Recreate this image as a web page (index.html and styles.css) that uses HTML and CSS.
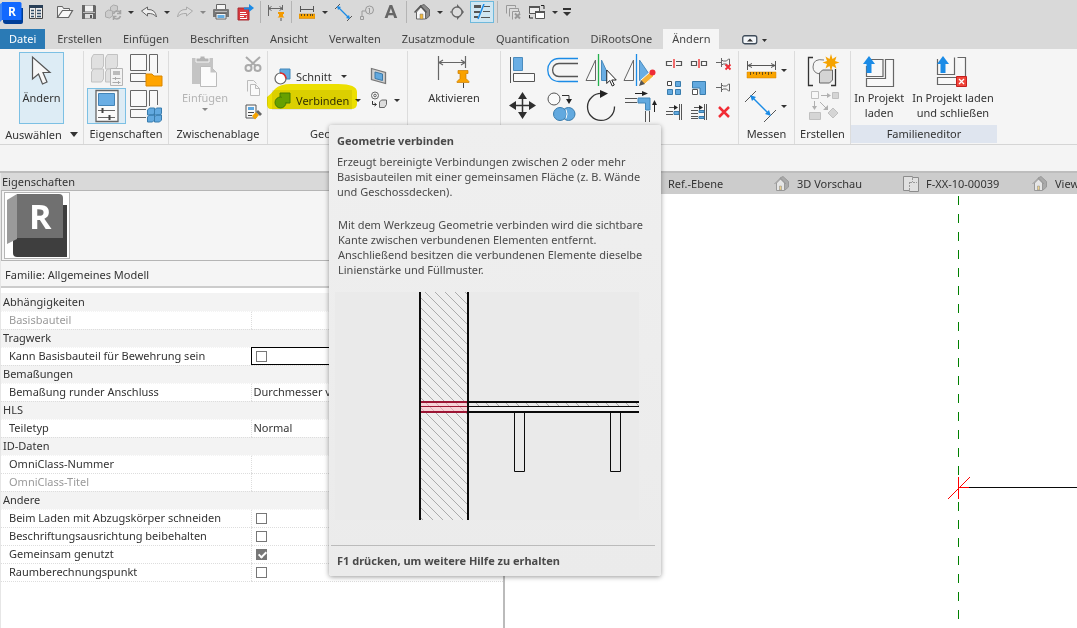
FILE: index.html
```html
<!DOCTYPE html>
<html lang="de">
<head>
<meta charset="utf-8">
<meta name="viewport" content="width=device-width, initial-scale=1">
<title>Revit – Familieneditor</title>
<link rel="stylesheet" href="styles.css">
</head>
<body>
<header class="top">
  <div class="qat">
    <button class="logo" aria-label="Revit"><svg width="24" height="24" viewBox="0 0 24 24"><path d="M3 8h20v14q0 2-2 2H6q-3 0-3-3z" fill="#003e97"/><path d="M0 4l3-2v17l-3 3z" fill="#3f86f4"/><path d="M2 2h18q1.500 0 1.500 1.500V20H2z" fill="#1269ff"/><text x="8" y="16" class="logo-r">R</text></svg></button>
    <button class="q" aria-label="Startseite"><svg width="16" height="16" viewBox="0 0 16 16"><path d="M1.500 1.500h13v13h-13z" fill="#eee" stroke="#444"/><path d="M1 1h14v3H1z" fill="#2a4058"/><path d="M3 6.500h3M3 9.500h3M3 12.500h3M9 6.500h4M9 9.500h4M9 12.500h4" stroke="#334e68" stroke-width="1.300"/><path d="M7.500 4v11" stroke="#777"/></svg></button>
    <span class="spacer"></span>
    <button class="q" aria-label="Öffnen"><svg width="18" height="16" viewBox="0 0 18 16"><path d="M1.500 13.500v-11h5l1 2h6v3" fill="#f3f3f3" stroke="#666"/><path d="M1.500 13.500l5-7h10l-4 7z" fill="#f8f8f8" stroke="#666" stroke-width="1.200"/></svg></button>
    <button class="q" aria-label="Speichern"><svg width="16" height="16" viewBox="0 0 16 16"><path d="M1 1h13l1 1v13H1z" fill="#666"/><path d="M4 1.500h8v6H4z" fill="#f0f0f0"/><path d="M4 10h8v4.500H4z" fill="#ddd"/><path d="M9 11h2v3H9z" fill="#555"/><path d="M2 8.500h12" stroke="#bbb"/></svg></button>
    <button class="q" aria-label="Synchronisieren"><svg width="18" height="17" viewBox="0 0 18 17"><g fill="#ccc" stroke="#aaa"><path d="M6.500 3l3-2 4 1v4l-3 2-4-1z"/><path d="M1.500 8l3-2 4 1v5l-3 2-4-1z"/></g><path d="M9.500 10q1-3 4-3 2 0 3 2M16.500 6v3.500H13M16.500 12q-1 3-4 3-2 0-3-2M9.500 16v-3.500h3" fill="none" stroke="#a4a4a4" stroke-width="1.500"/></svg></button>
    <button class="dd" aria-label="Synchronisieren Optionen"></button>
    <button class="q" aria-label="Rückgängig"><svg width="18" height="14" viewBox="0 0 18 14"><path d="M1.500 6l6-4v2.500q8-.500 9 7.500-3-4-9-3.500V11z" fill="#eee" stroke="#666"/></svg></button>
    <button class="dd" aria-label="Rückgängig Liste"></button>
    <button class="q" aria-label="Wiederholen"><svg width="18" height="14" viewBox="0 0 18 14"><path d="M16.500 6l-6-4v2.500q-8-.500-9 7.500 3-4 9-3.500V11z" fill="#ddd" stroke="#aaa"/></svg></button>
    <button class="dd pale" aria-label="Wiederholen Liste"></button>
    <button class="q" aria-label="Drucken"><svg width="18" height="16" viewBox="0 0 18 16"><path d="M4.500.500h9v5h-9z" fill="#f5f5f5" stroke="#666"/><path d="M2 5h14q1 0 1 1v7H1V6q0-1 1-1z" fill="#777"/><path d="M3 7.500h12" stroke="#bbb"/><path d="M4 9.500h10v5.500H4z" fill="#f4f4f4" stroke="#666"/><path d="M5.500 11h7v3h-7z" fill="#65ade2"/></svg></button>
    <button class="q" aria-label="PDF exportieren"><svg width="17" height="17" viewBox="0 0 17 17"><path d="M1 4h11v12H1z" fill="#d9393e" stroke="#a92f35"/><path d="M3 8.500h6M3 10.500h7M3 12.500h4M9 13h1M3 14.500h7" stroke="#fff"/><path d="M7 3.500h5V0l5 4-5 4V5.500H7z" fill="#1b8be6"/></svg></button>
    <span class="sep"></span>
    <button class="q" aria-label="Bemaßung aktivieren"><svg width="18" height="17" viewBox="0 0 18 17"><path d="M1.500 1v11M15.500 1v5M2 4.500h13M4.500 2.500l-3 2 3 2M12.500 2.500l3 2-3 2" fill="none" stroke="#666"/><path d="M11 8h6v2h-1v2l1.500 1.500h-7L12 12v-2h-1z" fill="#f39a00"/><path d="M14 14v3" stroke="#555"/></svg></button>
    <span class="sep"></span>
    <button class="q" aria-label="Messen"><svg width="16" height="14" viewBox="0 0 16 14"><path d="M1.500 1v6M14.500 1v6M2 4.500h12" stroke="#555"/><path d="M0 9h16v4.500H0z" fill="#f9a400" stroke="#cc7d00" stroke-width=".500"/><path d="M2.500 9v2M5.500 9v2M8.500 9v2M11.500 9v2M13.500 9v2" stroke="#5c4a20"/></svg></button>
    <button class="dd" aria-label="Messen Optionen"></button>
    <button class="q" aria-label="Ausgerichtete Bemaßung"><svg width="17" height="17" viewBox="0 0 17 17"><path d="M0 5l5-5M12 17l5-5" stroke="#555"/><path d="M3 3l11 11" stroke="#1b8be6" stroke-width="1.300"/><path d="M2 2l4 1-3 3zM15 15l-4-1 3-3z" fill="#1b8be6"/></svg></button>
    <button class="q" aria-label="Nach Kategorie beschriften"><svg width="15" height="15" viewBox="0 0 15 15"><circle cx="9.500" cy="5" r="4" fill="none" stroke="#999"/><path d="M8.500 4l1-1v5M5.500 6H2v5M.500 11.500h3v3h-3z" fill="none" stroke="#999"/></svg></button>
    <button class="q letter" aria-label="Text">A</button>
    <span class="sep"></span>
    <button class="q" aria-label="3D-Ansicht"><svg width="16" height="16" viewBox="0 0 16 16"><path d="M6 2l4-1.500 5.500 5V12L12 15z" fill="#8c8c8c" stroke="#666"/><path d="M2.500 8v7h9V8L7 3z" fill="#f7f7f7" stroke="#666"/><path d="M.500 8.500L6.500 2l6 6.500" fill="none" stroke="#555" stroke-width="1.500"/><path d="M6 10h3v5H6z" fill="#f4b93c" stroke="#777" stroke-width=".500"/></svg></button>
    <button class="dd" aria-label="3D-Ansicht Optionen"></button>
    <button class="q" aria-label="Schnitt"><svg width="16" height="16" viewBox="0 0 16 16"><path d="M7 0l7 8-7 8z" fill="#666"/><circle cx="7" cy="8" r="5" fill="#ddd" stroke="#666" stroke-width="1.300"/><path d="M0 8h2" stroke="#666"/></svg></button>
    <button class="q on" aria-label="Dünne Linien"><svg width="18" height="16" viewBox="0 0 18 16"><path d="M1 1h7v3H1zM1 7h6v2H1zM1 12h4v2H1z" fill="#555"/><path d="M11 2.500h6M10 7.500h7M8 13.500h9" stroke="#555"/><path d="M5 15l6-15" stroke="#1b8be6" stroke-width="1.500"/></svg></button>
    <span class="sep"></span>
    <button class="q" aria-label="Inaktive Ansichten schließen"><svg width="17" height="17" viewBox="0 0 17 17"><g fill="#ddd" stroke="#999"><path d="M1.500 9.500v-8h9v2M4.500 12.500v-8h9v3M7.500 15.500v-8h7v2"/><path d="M10 14.500l5-5M10 9.500l5 5" stroke-width="2"/></g></svg></button>
    <button class="q" aria-label="Fenster wechseln"><svg width="18" height="16" viewBox="0 0 18 16"><path d="M1.500 2.500h10v7h-10z" fill="#eee" stroke="#555"/><path d="M1 2h11v2H1z" fill="#555"/><path d="M7.500 7.500h9v7h-9z" fill="#fff" stroke="#555"/><path d="M7 7h10v2H7z" fill="#555"/><path d="M13 1.500h3V5M1.500 11v3H5" fill="none" stroke="#222"/></svg></button>
    <button class="dd" aria-label="Fenster Liste"></button>
    <button class="dd bar" aria-label="Schnellzugriff anpassen"></button>
  </div>
  <nav class="tabs">
    <button class="file">Datei</button>
    <button>Erstellen</button>
    <button>Einfügen</button>
    <button>Beschriften</button>
    <button>Ansicht</button>
    <button>Verwalten</button>
    <button>Zusatzmodule</button>
    <button>Quantification</button>
    <button>DiRootsOne</button>
    <button class="active">Ändern</button>
    <button class="min" aria-label="Multifunktionsleiste minimieren"><svg width="28" height="10" viewBox="0 0 28 10"><rect x=".750" y=".750" width="14" height="8" rx="2" fill="#f2f5f8" stroke="#3f4c5a" stroke-width="1.300"/><path d="M5 6.500l3-3 3 3zM20 4h5l-2.500 3z" fill="#333"/></svg></button>
  </nav>
</header>

<section class="ribbon">
  <div class="panel p-select">
    <div class="body">
      <button class="big on"><svg width="32" height="36" viewBox="0 0 32 36"><path d="M6.500 4v22l6-5 4 10 4.500-2-4-9.500h7z" fill="#f7f7f7" stroke="#555" stroke-width="1.200"/></svg><span>Ändern</span></button>
    </div>
    <button class="label">Auswählen <i class="caret wide"></i></button>
  </div>

  <div class="panel p-props">
    <div class="body grid2">
      <button aria-label="Familientyp"><svg width="34" height="34" viewBox="0 0 34 34"><g fill="#e0e0e0" stroke="#c2c2c2"><path d="M1.500 5l2-3.500h10V13l-2 3h-10z"/><path d="M15.500 5l2-3.500h10V13l-2 3h-10z"/><path d="M1.500 19l2-3h10v10l-2 3h-10z"/><path d="M15.500 19l2-3h9v10l-2 3h-9z"/></g><path d="M20.500 15.500h12v17h-12z" fill="#f2f2f2" stroke="#b5b5b5"/><path d="M23 18h7v4h-7z" fill="#bbb"/><path d="M22.500 25.500h8M22.500 29.500h8M25.500 24v3M28.500 28v3" stroke="#aaa"/></svg></button>
      <button aria-label="Familienkategorie"><svg width="34" height="34" viewBox="0 0 34 34"><path d="M1.500 1.500h16v16h-16zM20.500 18V1.500h8V20M17 28.500H1.500v-8H17" fill="#f8f8f8" stroke="#666"/><path d="M17 21h6l2 2h8v10H17z" fill="#ffa400" stroke="#db8700"/></svg></button>
      <button class="on" aria-label="Eigenschaften"><svg width="26" height="34" viewBox="0 0 26 34"><path d="M2 1.500h22v31H2z" fill="#fafafa" stroke="#666" stroke-width="1.300"/><path d="M4.500 4.500h16v12h-16z" fill="#6aaee4" stroke="#4384b7"/><path d="M4 21.500h17M4 28.500h17" stroke="#666"/><path d="M8.500 19v5M15.500 26v5" stroke="#444" stroke-width="2"/></svg></button>
      <button aria-label="Familientypen"><svg width="34" height="34" viewBox="0 0 34 34"><path d="M1.500 1.500h16v16h-16zM20.500 17V1.500h8V16M17 28.500H1.500v-8H17" fill="#f8f8f8" stroke="#666"/><g fill="#62a9df" stroke="#397cad"><path d="M18.500 21l2-2h5v5l-1 2h-6zM25.500 21l2-2h5v5l-1 2h-6zM18.500 28l2-2h5v5l-2 2h-5zM25.500 28l2-2h5v5l-2 2h-5z"/></g></svg></button>
    </div>
    <div class="label">Eigenschaften</div>
  </div>

  <div class="panel p-clip">
    <div class="body">
      <button class="big dim" disabled><svg width="32" height="36" viewBox="0 0 32 36"><path d="M3 5h21v26H3z" fill="#c4c4c4"/><path d="M7 5h4V3h5v2h4v4H7z" fill="#b4b4b4" stroke="#f5f5f5"/><path d="M11.500 13.500h10l6 6v14h-16z" fill="#fbfbfb" stroke="#bbb"/><path d="M21.500 13.500l6 6h-6z" fill="#c4c4c4"/></svg><span>Einfügen</span><i class="caret"></i></button>
      <div class="col">
        <button aria-label="Ausschneiden"><svg width="18" height="18" viewBox="0 0 18 18"><path d="M2 2l10 9M16 2L6 11" stroke="#aaa" stroke-width="2"/><g fill="none" stroke="#aaa" stroke-width="2"><circle cx="4.500" cy="13" r="3"/><circle cx="13.500" cy="13" r="3"/></g></svg></button>
        <button aria-label="Kopieren"><svg width="18" height="18" viewBox="0 0 18 18"><path d="M3.500 12.500v-11h6l3 3" fill="none" stroke="#bbb"/><path d="M6.500 5.500h5l4 4v7h-9zM11.500 5.500v4h4" fill="#fafafa" stroke="#bbb"/></svg></button>
        <button aria-label="Eigenschaften anpassen"><svg width="18" height="18" viewBox="0 0 18 18"><path d="M2 2h10v13H2z" fill="#f8f8f8" stroke="#555"/><path d="M4 4h6v3H4z" fill="#5ba7e0"/><path d="M4 9.500h6M4 12.500h4" stroke="#444"/><path d="M8 13l4-4 3 3-4 4.500z" fill="#f5a300"/><path d="M12 9l2-2 4 4-2 2z" fill="#666"/></svg></button>
      </div>
    </div>
    <div class="label">Zwischenablage</div>
  </div>

  <div class="panel p-geo">
    <div class="body">
      <div class="rows">
        <div class="row"><button class="cmd"><svg width="18" height="17" viewBox="0 0 18 17"><path d="M6 1h10v10H6z" fill="#62a9df" stroke="#4287b9"/><circle cx="6.500" cy="10.500" r="5.500" fill="#fff" stroke="#666" stroke-width="1.200"/><path d="M6 5q5 0 6 5.500" fill="none" stroke="#e12b2b" stroke-width="1.500"/></svg>Schnitt</button><button class="dd" aria-label="Schnitt Optionen"></button></div>
        <div class="row"><button class="cmd hover"><svg width="18" height="17" viewBox="0 0 18 17"><path d="M6 1h10v10H6z" fill="#6aafe8" stroke="#4588b9"/><circle cx="6.500" cy="10.500" r="5.500" fill="#6aafe8" stroke="#4588b9"/><path d="M7 2h8v8H9z" fill="#6aafe8"/></svg>Verbinden</button><button class="dd" aria-label="Verbinden Optionen"></button></div>
        <svg class="marker" width="92" height="28" viewBox="0 0 92 28"><path d="M1 14q4-3 8-8 5-5 16-5h47q19 0 19 8v12q0 5-6 5H5q-4 0-4-5z" fill="#f6e900"/></svg>
      </div>
      <div class="rows r2">
        <div class="row"><button class="ic" aria-label="Flächen teilen"><svg width="18" height="18" viewBox="0 0 18 18"><path d="M1.500 1.500l14 4v11l-14-4z" fill="#cfcfcf" stroke="#777" stroke-width="1.300"/><path d="M5 5l7.500 2v6.500L5 11.500z" fill="#62a9df" stroke="#3c79a7"/></svg></button></div>
        <div class="row"><button class="ic" aria-label="Farbe"><svg width="18" height="18" viewBox="0 0 18 18"><circle cx="5" cy="4.500" r="3.500" fill="none" stroke="#666"/><circle cx="5" cy="4.500" r="1.300" fill="none" stroke="#666"/><path d="M2.500 10v3.500H6M4.500 12l2 1.500-2 1.500" fill="none" stroke="#333"/><path d="M9.500 11l2-2h5v4.500l-2 3h-5z" fill="#ddd" stroke="#666"/></svg></button><button class="dd" aria-label="Farbe Optionen"></button></div>
      </div>
    </div>
    <div class="label">Geometrie</div>
  </div>

  <div class="panel p-ctrl">
    <div class="body">
      <button class="big"><svg width="34" height="36" viewBox="0 0 34 36"><path d="M1.500 3v24M28.500 3v12M2 9.500h26M6 7l-4 2.500 4 2.500M24 7l4 2.500-4 2.500" fill="none" stroke="#666" stroke-width="1.200"/><path d="M21 17.500h10v3h-2v5l3 3v1H20v-1l3-3v-5h-2z" fill="#f9a200" stroke="#ca7d00" stroke-width=".700"/><path d="M26.500 30v5" stroke="#444"/></svg><span>Aktivieren</span></button>
    </div>
    <div class="label"></div>
  </div>

  <div class="panel p-mod">
    <div class="body">
      <div class="grid4">
        <button aria-label="Ausrichten"><svg width="32" height="32" viewBox="0 0 32 32"><path d="M3.500 3v26" stroke="#555"/><path d="M6.500 3.500h9v13h-9z" fill="#6aaee4" stroke="#4a8cbf"/><path d="M6.500 19.500h21v8h-21z" fill="#fafafa" stroke="#555"/></svg></button>
        <button aria-label="Versatz"><svg width="34" height="32" viewBox="0 0 34 32"><path d="M33 4.500H14c-15 0-15 23 0 23h19" fill="none" stroke="#1b8be6" stroke-width="1.300"/><path d="M33 9.500H14c-8.500 0-8.500 13 0 13h19" fill="none" stroke="#555" stroke-width="1.300"/></svg></button>
        <button class="mirror" aria-label="Spiegeln – Achse wählen"><svg width="34" height="32" viewBox="0 0 34 32"><path d="M2 26.500h9.500V6z" fill="#f8f8f8" stroke="#666"/><path d="M17.500 6v20.500H27z" fill="#6aaee4" stroke="#4a8cbf"/><path d="M14.500 0v32" stroke="#23b14d" stroke-width="1.300"/></svg>
          <svg class="cursor" width="12" height="18" viewBox="0 0 12 18"><path d="M.750 1v13.500l3-3 2.500 5.500 2-1-2.500-5h4.500z" fill="#fff" stroke="#222"/></svg></button>
        <button aria-label="Spiegeln – Achse zeichnen"><svg width="34" height="32" viewBox="0 0 34 32"><path d="M1 26.500h9.500V6z" fill="#f8f8f8" stroke="#666"/><path d="M16.500 6v20.500H26V20z" fill="#6aaee4" stroke="#4a8cbf"/><path d="M13.500 0v32" stroke="#1b8be6" stroke-width="1.300"/><path d="M16 32l2-6 9-8 4 4-9 8z" fill="#f7b137" stroke="#fff"/><path d="M16 32l2-6 4 4z" fill="#555"/><circle cx="29.500" cy="18.500" r="3" fill="#ee2c36"/></svg></button>
        <button aria-label="Verschieben"><svg width="32" height="32" viewBox="0 0 32 32"><path d="M15.500 5v22M5 15.500h22" stroke="#333" stroke-width="1.500"/><path d="M15.500 2l4.500 7h-9zM15.500 29l4.500-7h-9zM2 15.500l7-4.500v9zM29 15.500l-7-4.500v9z" fill="#2e2e2e"/></svg></button>
        <button aria-label="Kopieren"><svg width="34" height="32" viewBox="0 0 34 32"><circle cx="9" cy="9" r="6" fill="#fafafa" stroke="#555"/><path d="M17 5.500h7V12" fill="none" stroke="#333"/><path d="M21 9h6l-3 5z" fill="#222"/><circle cx="23.500" cy="24" r="6.500" fill="#62a9df" stroke="#397cad"/><circle cx="15" cy="24" r="6.500" fill="#62a9df" stroke="#397cad"/><path d="M21 19.500q2 4.500 0 9" fill="none" stroke="#fff"/></svg></button>
        <button aria-label="Drehen"><svg width="34" height="32" viewBox="0 0 34 32"><path d="M18 3.500a13.500 13.500 0 1 0 12.500 13" fill="none" stroke="#333" stroke-width="1.300"/><path d="M16 0l8 3.500-8 4.500z" fill="#222"/></svg></button>
        <button aria-label="Stutzen/Dehnen für Ecke"><svg width="34" height="32" viewBox="0 0 34 32"><path d="M2 8.500h12M2 12.500h12M22.500 21v11M26.500 21v11" stroke="#555"/><path d="M15 8h12v12h-4.500v-7H15z" fill="#62a9df" stroke="#4287b9"/><path d="M12 3.500h10M31.500 22V12" stroke="#222"/><path d="M19 1l6 2.500L19 6zM29 15l2.500-5 2.500 5z" fill="#222"/></svg></button>
      </div>
      <div class="grid3">
        <button aria-label="Element teilen"><svg width="18" height="18" viewBox="0 0 18 18"><path d="M7 6.500H1.500v4H7M11 6.500h5.500v4H11" fill="none" stroke="#555" stroke-width="1.200"/><path d="M9 4v9" stroke="#e22" stroke-width="1.300"/></svg></button>
        <button aria-label="Mit Lücke teilen"><svg width="18" height="18" viewBox="0 0 18 18"><path d="M1.500 6.500h5v4h-5zM11.500 6.500h5v4h-5z" fill="#fafafa" stroke="#555" stroke-width="1.200"/><path d="M9 4v9" stroke="#e22" stroke-width="1.300"/></svg></button>
        <button aria-label="Lösen"><svg width="18" height="18" viewBox="0 0 18 18"><path d="M1 7.500h5M6.500 3v9M6.500 5l2 1h3l2-2h1v7h-1l-2-2h-3l-2 1" fill="none" stroke="#666"/><path d="M10.500 9.500l5 5M10.500 14.500l5-5" stroke="#f22c36" stroke-width="1.800"/></svg></button>
        <button aria-label="Reihe"><svg width="18" height="18" viewBox="0 0 18 18"><path d="M2.500 2.500h4v4h-4z" fill="#fff" stroke="#444"/><path d="M10.500 2.500h5v5h-5zM2.500 10.500h5v5h-5zM10.500 10.500h5v5h-5z" fill="#62a9df" stroke="#397cad"/></svg></button>
        <button aria-label="Skalieren"><svg width="18" height="18" viewBox="0 0 18 18"><path d="M2.500 2.500h13v13H10V9H2.500z" fill="#62a9df" stroke="#397cad"/><path d="M2.500 10.500h5v5h-5z" fill="#fff" stroke="#555"/></svg></button>
        <button aria-label="Fixieren"><svg width="18" height="18" viewBox="0 0 18 18"><path d="M1 8.500h5M6.500 4v9M6.500 6l2 1h3l2-2h1v7h-1l-2-2h-3l-2 1" fill="none" stroke="#666"/></svg></button>
        <button aria-label="Einzelnes Element stutzen"><svg width="18" height="18" viewBox="0 0 18 18"><path d="M1 8.500h7M1 11.500h7M14.500 1v16M16.500 1v16M4 4.500h7" stroke="#555"/><path d="M9 8.500h5v3H9z" fill="#62a9df" stroke="#397cad"/><path d="M9 2l4 2.500L9 7z" fill="#222"/></svg></button>
        <button aria-label="Mehrere Elemente stutzen"><svg width="18" height="18" viewBox="0 0 18 18"><path d="M1 7.500h7M1 10.500h7M1 13.500h7M1 15.500h7M14.500 1v16M16.500 1v16M4 4.500h7" stroke="#555"/><path d="M9 7.500h5v2H9zM9 13.500h5v2H9z" fill="#62a9df" stroke="#397cad"/><path d="M9 2l4 2.500L9 7z" fill="#222"/></svg></button>
        <button aria-label="Löschen"><svg width="18" height="18" viewBox="0 0 18 18"><path d="M4 4l10 10M4 14L14 4" stroke="#f12c35" stroke-width="2.500"/></svg></button>
      </div>
    </div>
    <div class="label"></div>
  </div>

  <div class="panel p-meas">
    <div class="body stack">
      <div class="row"><button aria-label="Messen"><svg width="34" height="34" viewBox="0 0 34 34"><path d="M3.500 8v9M31.500 8v9M4 12.500h27M8 10.500l-4 2 4 2M27 10.500l4 2-4 2" fill="none" stroke="#555"/><path d="M3 19h29v6H3z" fill="#f9a400" stroke="#d48200" stroke-width=".500"/><path d="M6.500 19v3M9.500 19v2M12.500 19v3M15.500 19v2M18.500 19v3M21.500 19v2M24.500 19v3M27.500 19v2" stroke="#6a5017"/></svg></button><button class="dd" aria-label="Messen Optionen"></button></div>
      <div class="row"><button aria-label="Bemaßung"><svg width="34" height="34" viewBox="0 0 34 34"><path d="M1 13L12 2M20 33l12-12" stroke="#555"/><path d="M8 8l17 17" stroke="#1b8be6" stroke-width="1.500"/><path d="M6 6l6 2-4 4zM27 27l-6-2 4-4z" fill="#1b8be6"/></svg></button><button class="dd" aria-label="Bemaßung Optionen"></button></div>
    </div>
    <div class="label">Messen</div>
  </div>

  <div class="panel p-create">
    <div class="body stack">
      <button aria-label="Gruppe erstellen"><svg width="34" height="34" viewBox="0 0 34 34"><path d="M7 4.500H2.500v28H7M25 32.500h4.500V16" fill="none" stroke="#333" stroke-width="1.300"/><path d="M18 7q-11-2-11 7 0 6 7 7" fill="none" stroke="#777"/><path d="M13.500 20l3-3h10v10l-3 3h-10z" fill="#d4d4d4" stroke="#666"/><path d="M25 1l1.500 5 4-2.500-1.500 4.500 4.500 1.500-4.500 1.500 1.500 4.500-4-2.500L25 18l-1.500-5-4 2.500 1.500-4.500-4.500-1.500L21 8l-1.500-4.500 4 2.500z" fill="#f5a300"/></svg></button>
      <button aria-label="Ähnliche erstellen" disabled><svg width="34" height="34" viewBox="0 0 34 34"><g fill="#d5d5d5" stroke="#c0c0c0"><path d="M5.500 2.500h7v7h-7z" fill="#f7f7f7"/><path d="M26.500 3.500h6v6h-6zM3.500 23.500h11v7h-11zM27 19l5 5-5 5-5-5z"/><path d="M15 6.500h8M8.500 12v7M14 13l6 6" stroke="#b0b0b0"/><path d="M21 4l4 2.500-4 2.500zM6 17h5l-2.500 4zM22 16v5h-5z" fill="#b0b0b0" stroke="none"/></g></svg></button>
    </div>
    <div class="label">Erstellen</div>
  </div>

  <div class="panel p-fam">
    <div class="body">
      <button class="big"><svg width="34" height="36" viewBox="0 0 34 36"><path d="M8 6.500h13v17H4.500V13M23.500 6.500h8v27h-27v-8h19z" fill="#f8f8f8" stroke="#666" stroke-width="1.200"/><path d="M4.500 20v-9H1l6-8 6 8H9.500v9z" fill="#1b8be6"/></svg><span>In Projekt<br>laden</span></button>
      <button class="big"><svg width="34" height="36" viewBox="0 0 34 36"><path d="M1.500 6v15.500h17V4.500M21.500 4.500h8v19M20 31.500H1.500v-7H20" fill="#f8f8f8" stroke="#666" stroke-width="1.200"/><path d="M4.500 20v-9H1l6-8 6 8H9.500v9z" fill="#1b8be6"/><path d="M20.500 23.500h10v10h-10z" fill="#f04438" stroke="#c41f1f"/><path d="M23 26l5 5M23 31l5-5" stroke="#fff" stroke-width="1.300"/></svg><span>In Projekt laden<br>und schließen</span></button>
    </div>
    <div class="label">Familieneditor</div>
  </div>
</section>

<div class="options"></div>

<main class="work">
  <aside class="props">
    <h2>Eigenschaften</h2>
    <div class="preview"><div class="thumb"><svg width="64" height="64" viewBox="0 0 64 64"><path d="M8 12h54v52H12q-4 0-4-4z" fill="#3e3e3e"/><path d="M2 7l10-6v45L2 51z" fill="#9a9a9a"/><path d="M12 1h42q4 0 4 4v40H12z" fill="#707070"/><text x="24" y="36" class="thumb-r">R</text></svg></div></div>
    <p class="family">Familie: Allgemeines Modell</p>
    <table>
      <tbody>
        <tr class="group"><th colspan="2">Abhängigkeiten</th></tr>
        <tr class="muted"><td>Basisbauteil</td><td></td></tr>
        <tr class="group"><th colspan="2">Tragwerk</th></tr>
        <tr><td><label for="c1">Kann Basisbauteil für Bewehrung sein</label></td><td class="focus"><input type="checkbox" id="c1"></td></tr>
        <tr class="group"><th colspan="2">Bemaßungen</th></tr>
        <tr><td>Bemaßung runder Anschluss</td><td>Durchmesser verwenden</td></tr>
        <tr class="group"><th colspan="2">HLS</th></tr>
        <tr><td>Teiletyp</td><td>Normal</td></tr>
        <tr class="group"><th colspan="2">ID-Daten</th></tr>
        <tr><td>OmniClass-Nummer</td><td></td></tr>
        <tr class="muted"><td>OmniClass-Titel</td><td></td></tr>
        <tr class="group"><th colspan="2">Andere</th></tr>
        <tr><td><label for="c2">Beim Laden mit Abzugskörper schneiden</label></td><td><input type="checkbox" id="c2"></td></tr>
        <tr><td><label for="c3">Beschriftungsausrichtung beibehalten</label></td><td><input type="checkbox" id="c3"></td></tr>
        <tr><td><label for="c4">Gemeinsam genutzt</label></td><td><input type="checkbox" id="c4" checked></td></tr>
        <tr><td><label for="c5">Raumberechnungspunkt</label></td><td><input type="checkbox" id="c5"></td></tr>
      </tbody>
    </table>
  </aside>

  <section class="views">
    <nav class="viewtabs">
      <button><svg width="16" height="16" viewBox="0 0 16 16"><path d="M.500.500h9v3h6v12h-15z" fill="#e2e2e2" stroke="#888"/></svg>Ref.-Ebene</button>
      <button><svg width="16" height="16" viewBox="0 0 16 16"><path d="M6 2l3-1.500 5.500 5V11L11 14z" fill="#aaa" stroke="#999"/><path d="M2.500 7v7.500h8V7l-4-4z" fill="#e6e6e6" stroke="#999"/><path d="M.500 8L6.500 2l5.500 6" fill="none" stroke="#999"/><path d="M5.500 10h2v4h-2z" fill="#edd28c" stroke="#888" stroke-width=".500"/></svg>3D Vorschau</button>
      <button><svg width="16" height="16" viewBox="0 0 16 16"><path d="M.500.500h9v1h6v14h-9v-1h-6z" fill="#e0e0e0" stroke="#8c8c8c"/><path d="M6.500 14V6M7 6.500h7M9.500 2v4" stroke="#999" stroke-dasharray="2 1"/></svg>F-XX-10-00039</button>
      <button><svg width="16" height="16" viewBox="0 0 16 16"><path d="M6 2l3-1.500 5.500 5V11L11 14z" fill="#aaa" stroke="#999"/><path d="M2.500 7v7.500h8V7l-4-4z" fill="#e6e6e6" stroke="#999"/><path d="M.500 8L6.500 2l5.500 6" fill="none" stroke="#999"/><path d="M5.500 10h2v4h-2z" fill="#edd28c" stroke="#888" stroke-width=".500"/></svg>View</button>
    </nav>
    <div class="canvas">
      <svg width="100%" height="100%"><path d="M452.500 2v2000" stroke="#008000" stroke-dasharray="9 9"/><line x1="453" y1="293.500" x2="100%" y2="293.500" stroke="#0a0a0a"/><path d="M442 305l22-22" stroke="#f00"/><path d="M452.500 283v22M453 293.500h10" stroke="#f00"/></svg>
    </div>
  </section>
</main>

<aside class="tip" role="tooltip">
  <h3>Geometrie verbinden</h3>
  <p>Erzeugt bereinigte Verbindungen zwischen 2 oder mehr<br>Basisbauteilen mit einer gemeinsamen Fläche (z. B. Wände<br>und Geschossdecken).</p>
  <p class="more">Mit dem Werkzeug Geometrie verbinden wird die sichtbare<br>Kante zwischen verbundenen Elementen entfernt.<br>Anschließend besitzen die verbundenen Elemente dieselbe<br>Linienstärke und Füllmuster.</p>
  <svg class="figure" width="304" height="228" viewBox="0 0 304 228">
    <defs><pattern id="hatch" width="10" height="10" patternUnits="userSpaceOnUse"><path d="M-1-1l12 12M-1 9l2 2M9-1l2 2" stroke="#999" stroke-width=".800"/></pattern></defs>
    <path d="M0 0h304v228H0z" fill="#eaeaea"/>
    <path d="M86 0h46v228H86z" fill="#eee"/><path d="M86 0h46v228H86z" fill="url(#hatch)"/>
    <path d="M134 110h170v4H134z" fill="url(#hatch)"/>
    <path d="M134 115h170v4H134z" fill="#f2f2f2"/>
    <path d="M86 109h46v12H86z" fill="#ffb5bf" opacity=".500"/>
    <path d="M86 110h46M86 120h46" stroke="#9b1533" stroke-width="2"/><path d="M86 114.500h46" stroke="#9b1533"/>
    <path d="M85 0v228M133 0v228M134 110h170M134 120h170" stroke="#0b0b0b" stroke-width="2"/>
    <path d="M134 114.500h170M179.500 121v58.500h10V121M275.500 121v58.500h10V121" fill="none" stroke="#0b0b0b"/>
  </svg>
  <footer>F1 drücken, um weitere Hilfe zu erhalten</footer>
</aside>
</body>
</html>
```
FILE: styles.css
```css
* { box-sizing: border-box; }
html, body { height: 100%; }
body {
  margin: 0;
  display: flex;
  flex-direction: column;
  overflow: hidden;
  position: relative;
  background: #f5f5f5;
  color: #333;
  font: 11px/15px "Noto Sans", "Open Sans", sans-serif;
}
button {
  margin: 0;
  padding: 0;
  border: 0;
  background: none;
  color: inherit;
  font: inherit;
  white-space: nowrap;
}
svg { display: block; flex: none; }
h2, h3, p { margin: 0; font-size: 11px; font-weight: 400; }

.top { background: #d9d9d9; }
.qat { display: flex; height: 29px; padding-bottom: 5px; align-items: center; }
.q { width: 24px; height: 24px; display: grid; place-items: center; flex: none; }
.q.on { background: #cfe6f2; border: 1px solid #6fb9dc; height: 22px; }
.logo { width: 24px; height: 24px; }
.logo-r { font: bold 12px "Open Sans", sans-serif; fill: #fff; }
.letter { font: bold 19px/24px Roboto, sans-serif; color: #666; }
.spacer { width: 5px; }
.sep { width: 1px; height: 22px; margin: 0 3px; background: #b4b4b4; }
.dd { width: 12px; height: 18px; display: grid; place-items: center; flex: none; }
.dd::before, .caret {
  content: "";
  width: 0;
  height: 0;
  border: 3px solid transparent;
  border-top-color: #333;
  border-bottom: 0;
}
.dd.pale::before, .dim .caret { border-top-color: #888; }
.dd.bar::before { border-width: 4px 4px 0; }
.dd.bar { align-content: center; gap: 2px; }
.dd.bar::after { content: ""; order: -1; width: 8px; height: 2px; background: #333; }
.caret.wide { border-width: 5px 4px 0; }
.dim .caret { margin-top: 3px; }

.tabs { display: flex; gap: 1px; height: 20px; color: #444; }
.tabs button { padding: 0 10px; line-height: 20px; }
.tabs .file { background: #2a7ab5; color: #fff; padding: 0 9px; margin-right: 1px; }
.tabs .active { background: #f5f5f5; padding: 0 9px; }
.tabs .min { padding: 1px 22px 0; display: grid; align-items: center; }

.ribbon { display: flex; height: 96px; padding-top: 2px; border-bottom: 1px solid #d5d5d5; background: #f5f5f5; }
.panel { flex: none; border-right: 1px solid #dcdcdc; display: flex; flex-direction: column; }
.body { display: flex; height: 74px; padding-top: 1px; justify-content: center; }
.label { height: 18px; line-height: 17px; text-align: center; white-space: nowrap; }
.p-select { width: 84px; }
.p-props { width: 85px; }
.p-clip { width: 99px; }
.p-geo { width: 140px; }
.p-ctrl { width: 93px; }
.p-mod { width: 238px; }
.p-meas { width: 56px; }
.p-create { width: 56px; }
.p-fam { width: 146px; border: 0; }
.p-fam .label { background: #dfe5ef; }
.p-select .label { display: flex; justify-content: center; align-items: center; gap: 8px; }
.big { display: flex; flex-direction: column; align-items: center; height: 72px; padding-top: 1px; line-height: 15px; }
.big span { padding-top: 1px; }
.big.on { width: 45px; background: #ddecf5; border: 1px solid #7cc0e4; padding-top: 0; }
.dim { color: #b4b4b4; }
.grid2 { display: grid; grid-template-columns: 39px 39px; grid-template-rows: 36px 36px; }
.grid2 button, .grid4 button, .grid3 button { display: grid; place-items: center; position: relative; }
.grid2 .on { background: #ddecf5; border: 1px solid #7cc0e4; }
.col { display: grid; grid-template-rows: 24px 24px 24px; align-items: center; padding-left: 16px; }
.p-clip .body { justify-content: flex-start; padding-left: 13px; }
.rows { position: relative; width: 100px; padding: 12px 0 0 4px; }
.r2 { width: 40px; padding-left: 3px; }
.row { display: flex; align-items: center; height: 24px; }
.cmd { display: flex; align-items: center; gap: 4px; height: 20px; padding: 0 3px 0 2px; }
.cmd.hover { background: #e3e3e3; }
.rows:not(.r2) .row:first-child .dd { margin-left: 3px; }
.r2 .dd { margin-left: 3px; }
.marker { position: absolute; left: -2px; top: 31px; mix-blend-mode: multiply; pointer-events: none; }
.grid4 { display: grid; grid-template-columns: repeat(4, 39px); grid-template-rows: 36px 36px; }
.grid3 { display: grid; grid-template-columns: repeat(3, 25px); grid-template-rows: repeat(3, 24px); padding-left: 2px; }
.cursor { position: absolute; left: 25px; top: 17px; }
.stack { flex-direction: column; align-items: center; justify-content: flex-start; }
.stack .row { height: 36px; }
.stack > button { height: 36px; }
.p-fam .body { gap: 8px; }

.options { flex: none; height: 28px; border-bottom: 2px solid #bdbdbd; background: #f4f4f4; }

.work { flex: 1; display: flex; min-height: 0; background: #fff; }
.props { width: 505px; flex: none; border-right: 2px solid #bbb; border-left: 1px solid #e6e6e6; background: #fff; }
.props h2 { height: 17px; line-height: 17px; padding-left: 1px; background: #d9d9d9; }
.preview { border: 1px solid #b5b5b5; padding: 1px 2px; background: #f5f5f5; }
.thumb { width: 66px; height: 67px; border: 1px solid #b5b5b5; background: #fff; }
.thumb-r { font: bold 34px "Open Sans", sans-serif; fill: #fff; }
.family { height: 27px; line-height: 28px; padding-left: 4px; background: #f5f5f5; border-bottom: 2px solid #ccc; }
table { width: 100%; margin-top: 5px; border-collapse: collapse; table-layout: auto; line-height: 15px; }
th, td { height: 18px; padding: 0 0 1px; text-align: left; font-weight: 400; vertical-align: middle; border-bottom: 1px dotted #ddd; white-space: nowrap; }
th { padding-left: 2px; background: #f3f3f3; border-color: #f3f3f3; }
td { padding: 0 0 2px 8px; }
td + td { padding-left: 2px; border-left: 1px dotted #ddd; }
td:first-child { width: 250px; }
.muted { color: #9a9a9a; }
td.focus { outline: 1px solid #000; outline-offset: -1px; }
input[type="checkbox"] { appearance: none; display: block; width: 11px; height: 11px; margin: 3px 0 0 2px; border: 1px solid #777; background: #fff; }
input:checked { background: #777; position: relative; }
input:checked::after { content: ""; position: absolute; left: 3px; top: 0; width: 3px; height: 6px; border: solid #fff; border-width: 0 2px 2px 0; transform: rotate(45deg); }

.views { flex: 1; min-width: 0; display: flex; flex-direction: column; }
.viewtabs { display: flex; flex: none; height: 21px; padding-left: 140px; background: #ccc; overflow: hidden; }
.viewtabs button { flex: none; width: 129px; display: flex; align-items: center; gap: 7px; }
.canvas { flex: 1; min-height: 0; padding-left: 1px; }

.tip {
  position: absolute;
  left: 329px;
  top: 125px;
  width: 332px;
  padding: 8px 6px 8px 2px;
  border-radius: 3px;
  background: linear-gradient(#efefef, #ebebeb);
  box-shadow: 0 1px 5px rgba(0, 0, 0, .4);
  color: #4a4a4a;
}
.tip h3 { padding-left: 6px; font-weight: 700; }
.tip p { padding: 6px 0 0 6px; white-space: nowrap; }
.tip .more { padding: 18px 0 0 7px; }
.figure { margin: 15px 0 25px 4px; }
.tip footer { padding: 7px 0 0 6px; border-top: 1px solid #bbb; font-weight: 700; }
```
